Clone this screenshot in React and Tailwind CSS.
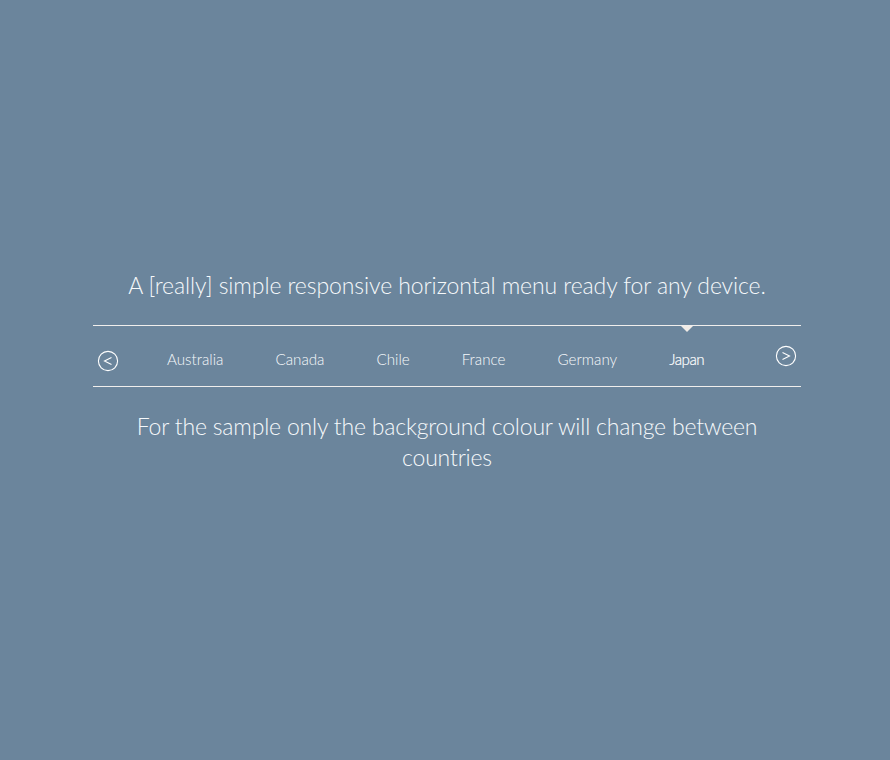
import React from "react";

const countries = ["Australia", "Canada", "Chile", "France", "Germany", "Japan"];

function Arrow({ dir }) {
  return (
    <svg width="22" height="22" viewBox="0 0 22 22" fill="none" stroke="#fff" strokeWidth="1.1">
      <circle cx="11" cy="11" r="9.6" />
      {dir === "left" ? <path d="M14.5 7.5 L7.5 11 L14.5 14.5" /> : <path d="M7.5 7.5 L14.5 11 L7.5 14.5" />}
    </svg>
  );
}

export default function App() {
  return (
    <div className="min-h-[760px] bg-[#6b859c] pt-[269px] pl-[93px] font-['Lato',sans-serif] font-light text-[#f6f9fb]">
      <div className="w-[708px]">
        <h1 className="h-[56px] text-center text-[23px] leading-[32px] font-light tracking-[-0.09px]">
          A [really] simple responsive horizontal menu ready for any device.
        </h1>
        <nav className="relative flex h-[62px] items-center border-y border-[#f0eeec]">
          <div className="mt-[10px] ml-[4px] flex w-[70px]">
            <Arrow dir="left" />
          </div>
          <ul className="flex flex-1 gap-[52px] text-[15.2px] leading-[20px]">
            {countries.map((name) => (
              <li key={name} className={name === "Japan" ? "relative mt-[6px] tracking-[-0.5px] text-white [-webkit-text-stroke:0.2px_#fff]" : "mt-[6px]"}>
                {name}
                {name === "Japan" && (
                  <span className="absolute top-[-23px] left-[12px] h-0 w-0 border-x-[6px] border-t-[6px] border-x-transparent border-t-[#f0ebe6]" />
                )}
              </li>
            ))}
          </ul>
          <div className="mr-[4px]">
            <Arrow dir="right" />
          </div>
        </nav>
        <p className="mt-[24px] text-center text-[23px] leading-[31px] font-light tracking-[-0.18px]">
          For the sample only the background colour will change between countries
        </p>
      </div>
    </div>
  );
}
